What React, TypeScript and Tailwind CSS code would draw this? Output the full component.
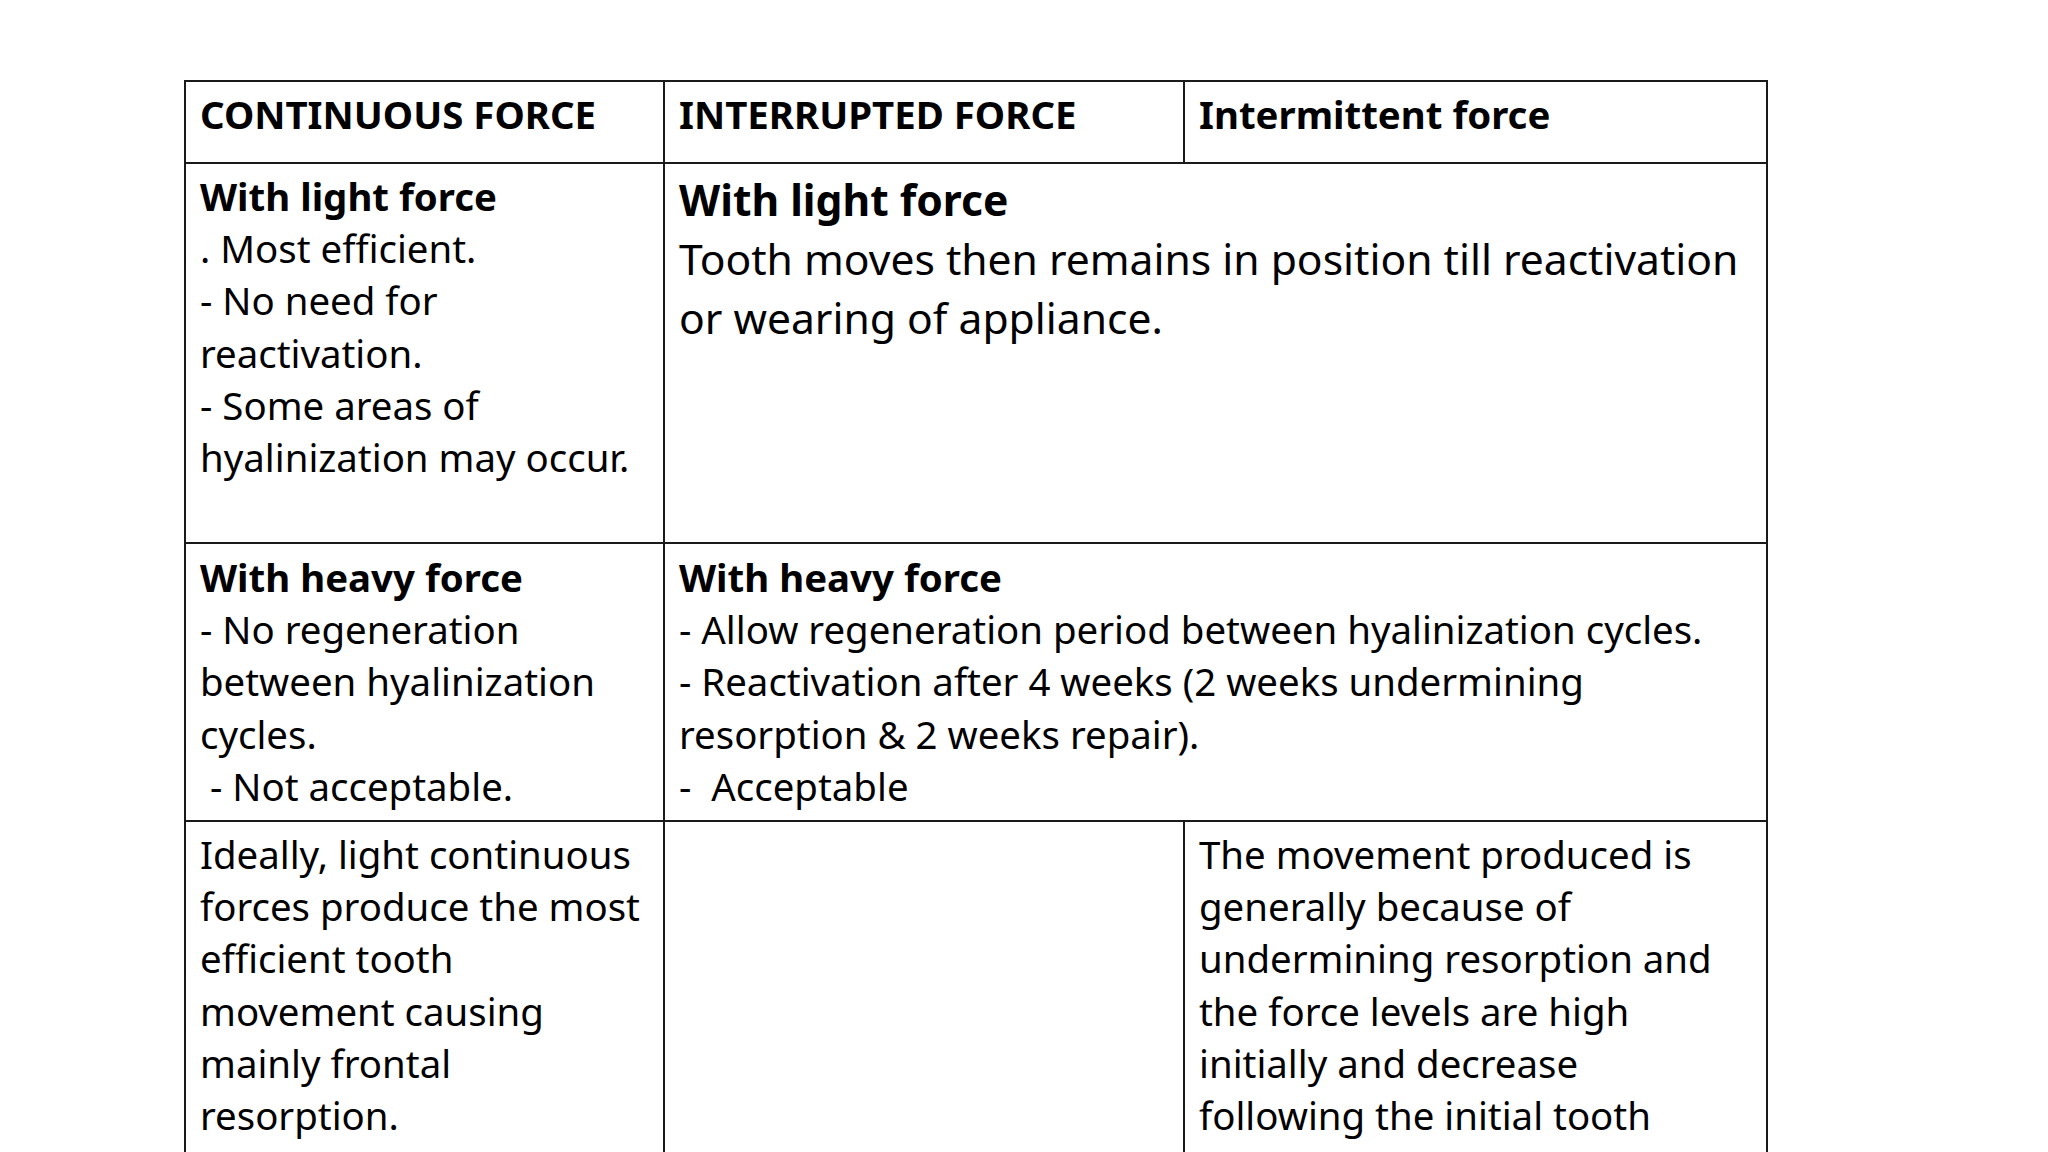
import React from "react";

const cell = "border-2 border-[#1a1a1a] align-top px-[14px] pt-[6px] pb-0 whitespace-pre-wrap";

export default function App() {
  return (
    <div className="w-[2048px] h-[1152px] overflow-hidden bg-white text-black" style={{ fontFamily: '"Noto Sans", "Open Sans", sans-serif' }}>
      <div className="pt-[80px] pl-[184px]">
        <table className="border-collapse table-fixed w-[1582px] text-[38.4px] leading-[52.2px]">
          <colgroup>
            <col className="w-[479px]" />
            <col className="w-[520px]" />
            <col className="w-[583px]" />
          </colgroup>
          <tbody>
            <tr className="h-[82px]">
              <td className={cell + " font-bold"}>CONTINUOUS FORCE</td>
              <td className={cell + " font-bold"}>INTERRUPTED FORCE</td>
              <td className={cell + " font-bold"}>Intermittent force</td>
            </tr>
            <tr className="h-[380px]">
              <td className={cell}>
                <div className="font-bold">With light force</div>
                <div>. Most efficient.</div>
                <div>- No need for reactivation.</div>
                <div>- Some areas of hyalinization may occur.</div>
              </td>
              <td className={cell + " text-[42.6px] leading-[58.8px]"} colSpan={2}>
                <div className="font-bold">With light force</div>
                <div>Tooth moves then remains in position till reactivation or wearing of appliance.</div>
              </td>
            </tr>
            <tr className="h-[278px]">
              <td className={cell + " pt-[7px]"}>
                <div className="font-bold">With heavy force</div>
                <div>- No regeneration between hyalinization cycles.</div>
                <div>{" - Not acceptable."}</div>
              </td>
              <td className={cell + " pt-[7px]"} colSpan={2}>
                <div className="font-bold">With heavy force</div>
                <div>- Allow regeneration period between hyalinization cycles.</div>
                <div>- Reactivation after 4 weeks (2 weeks undermining resorption &amp; 2 weeks repair).</div>
                <div>{"-  Acceptable"}</div>
              </td>
            </tr>
            <tr>
              <td className={cell}>
                Ideally, light continuous forces produce the most efficient tooth movement causing mainly frontal resorption.
              </td>
              <td className={cell}></td>
              <td className={cell}>
                The movement produced is generally because of undermining resorption and the force levels are high initially and decrease following the initial tooth movement.
              </td>
            </tr>
          </tbody>
        </table>
      </div>
    </div>
  );
}
